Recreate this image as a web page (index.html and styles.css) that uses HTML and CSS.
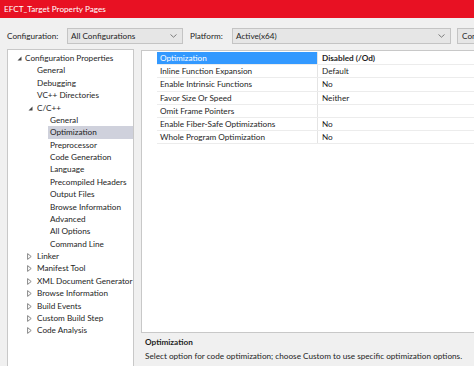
FILE: index.html
```html
<!DOCTYPE html>
<html>
<head>
<meta charset="utf-8">
<link rel="stylesheet" href="styles.css">
</head>
<body>
<div class="window">
  <div class="titlebar">EFCT_Target Property Pages</div>
  <div class="configbar">
    <span class="label">Configuration:</span>
    <div class="combo combo-config"><span>All Configurations</span><svg class="chev" width="7" height="4" viewBox="0 0 7 4"><path d="M0.5 0.5 L3.5 3.2 L6.5 0.5" fill="none" stroke="#707070" stroke-width="0.9"/></svg></div>
    <span class="label label-platform">Platform:</span>
    <div class="combo combo-platform"><span>Active(x64)</span><svg class="chev" width="7" height="4" viewBox="0 0 7 4"><path d="M0.5 0.5 L3.5 3.2 L6.5 0.5" fill="none" stroke="#707070" stroke-width="0.9"/></svg></div>
    <div class="button">Configuration Manager...</div>
  </div>
  <div class="main">
    <div class="tree">
      <div class="node l1"><svg class="exp" width="5" height="5" viewBox="0 0 5 5"><path d="M4.5 0.5 L4.5 4.5 L0.5 4.5 Z" fill="#444"/></svg>Configuration Properties</div>
      <div class="node l2">General</div>
      <div class="node l2">Debugging</div>
      <div class="node l2">VC++ Directories</div>
      <div class="node l2"><svg class="exp" width="5" height="5" viewBox="0 0 5 5"><path d="M4.5 0.5 L4.5 4.5 L0.5 4.5 Z" fill="#444"/></svg>C/C++</div>
      <div class="node l3">General</div>
      <div class="node l3"><span class="sel">Optimization</span></div>
      <div class="node l3">Preprocessor</div>
      <div class="node l3">Code Generation</div>
      <div class="node l3">Language</div>
      <div class="node l3">Precompiled Headers</div>
      <div class="node l3">Output Files</div>
      <div class="node l3">Browse Information</div>
      <div class="node l3">Advanced</div>
      <div class="node l3">All Options</div>
      <div class="node l3">Command Line</div>
      <div class="node l2"><svg class="col" width="5" height="7" viewBox="0 0 5 7"><path d="M0.6 0.6 L4.2 3.5 L0.6 6.4 Z" fill="none" stroke="#7a7a7a" stroke-width="0.9"/></svg>Linker</div>
      <div class="node l2"><svg class="col" width="5" height="7" viewBox="0 0 5 7"><path d="M0.6 0.6 L4.2 3.5 L0.6 6.4 Z" fill="none" stroke="#7a7a7a" stroke-width="0.9"/></svg>Manifest Tool</div>
      <div class="node l2"><svg class="col" width="5" height="7" viewBox="0 0 5 7"><path d="M0.6 0.6 L4.2 3.5 L0.6 6.4 Z" fill="none" stroke="#7a7a7a" stroke-width="0.9"/></svg>XML Document Generator</div>
      <div class="node l2"><svg class="col" width="5" height="7" viewBox="0 0 5 7"><path d="M0.6 0.6 L4.2 3.5 L0.6 6.4 Z" fill="none" stroke="#7a7a7a" stroke-width="0.9"/></svg>Browse Information</div>
      <div class="node l2"><svg class="col" width="5" height="7" viewBox="0 0 5 7"><path d="M0.6 0.6 L4.2 3.5 L0.6 6.4 Z" fill="none" stroke="#7a7a7a" stroke-width="0.9"/></svg>Build Events</div>
      <div class="node l2"><svg class="col" width="5" height="7" viewBox="0 0 5 7"><path d="M0.6 0.6 L4.2 3.5 L0.6 6.4 Z" fill="none" stroke="#7a7a7a" stroke-width="0.9"/></svg>Custom Build Step</div>
      <div class="node l2"><svg class="col" width="5" height="7" viewBox="0 0 5 7"><path d="M0.6 0.6 L4.2 3.5 L0.6 6.4 Z" fill="none" stroke="#7a7a7a" stroke-width="0.9"/></svg>Code Analysis</div>
    </div>
    <div class="right">
      <div class="grid">
        <div class="rows">
          <div class="row selected"><div class="name">Optimization</div><div class="value bold">Disabled (/Od)</div></div>
          <div class="row"><div class="name">Inline Function Expansion</div><div class="value">Default</div></div>
          <div class="row"><div class="name">Enable Intrinsic Functions</div><div class="value">No</div></div>
          <div class="row"><div class="name">Favor Size Or Speed</div><div class="value">Neither</div></div>
          <div class="row"><div class="name">Omit Frame Pointers</div><div class="value"></div></div>
          <div class="row"><div class="name">Enable Fiber-Safe Optimizations</div><div class="value">No</div></div>
          <div class="row"><div class="name">Whole Program Optimization</div><div class="value">No</div></div>
        </div>
      </div>
      <div class="desc">
        <div class="desc-title">Optimization</div>
        <div class="desc-text">Select option for code optimization; choose Custom to use specific optimization options.</div>
      </div>
    </div>
  </div>
</div>
</body>
</html>
```

FILE: styles.css
```css
html, body {
  margin: 0;
  padding: 0;
  overflow: hidden;
}
body {
  width: 474px;
  height: 366px;
  background: #f0f0f0;
  font-family: "Lato", "Open Sans", sans-serif;
  font-size: 8.2px;
  color: #1e1e1e;
}
.window {
  width: 474px;
  height: 366px;
  display: flex;
  flex-direction: column;
  overflow: hidden;
}
.titlebar {
  height: 18px;
  flex: none;
  background: #e81123;
  color: #fff;
  padding-left: 4px;
  line-height: 18px;
  font-size: 8.2px;
}
.configbar {
  height: 31px;
  flex: none;
  box-sizing: border-box;
  display: flex;
  align-items: center;
  padding: 5px 0 0 7px;
  white-space: nowrap;
}
.label {
  width: 60px;
  flex: none;
}
.label-platform {
  width: 42px;
  margin-left: 7px;
}
.combo {
  flex: none;
  height: 16px;
  box-sizing: border-box;
  border: 1px solid #c4c4c4;
  background: #e6e6e6;
  display: flex;
  align-items: center;
  justify-content: space-between;
  padding: 0 5px 0 3px;
}
.combo-config { width: 116px; }
.combo-platform { width: 219px; }
.button {
  flex: none;
  margin-left: 6px;
  height: 16px;
  box-sizing: border-box;
  border: 1px solid #c4c4c4;
  background: #e6e6e6;
  padding: 0 4px;
  line-height: 14px;
}
.main {
  flex: 1;
  display: flex;
  min-height: 0;
}
.tree {
  flex: none;
  margin-left: 7px;
  width: 127px;
  height: 330px;
  box-sizing: border-box;
  background: #fff;
  border: 1px solid #c8c8c8;
  padding-top: 2px;
}
.node {
  height: 12.38px;
  line-height: 12.38px;
  white-space: nowrap;
  position: relative;
}
.l1 { padding-left: 17px; }
.l2 { padding-left: 29px; }
.l3 { padding-left: 42px; }
.exp {
  position: absolute;
  top: 4px;
  margin-left: -9px;
}
.l1 .exp { margin-left: -8px; }
.col {
  position: absolute;
  top: 3px;
  margin-left: -10px;
}
.sel {
  display: block;
  background: #cfd1dc;
  margin-left: -2px;
  padding-left: 2px;
}
.right {
  flex: none;
  width: 333px;
  margin-left: 7px;
  display: flex;
  flex-direction: column;
}
.grid {
  height: 283px;
  flex: none;
  box-sizing: border-box;
  background: #fff;
  border: 1px solid #c8c8c8;
  border-right: none;
  margin-top: 1px;
  padding: 1px 0 0 15px;
}
.rows {
  background: #fff;
}
.row {
  display: flex;
  height: 13.2px;
  line-height: 12.2px;
  box-sizing: border-box;
  border-bottom: 1px solid #ececec;
}
.name {
  width: 161px;
  flex: none;
  padding-left: 3px;
  box-sizing: border-box;
  border-right: 1px solid #e4e4e4;
}
.value {
  flex: 1;
  padding-left: 4px;
}
.selected .name {
  background: #3399ff;
  color: #fff;
}
.bold { font-weight: bold; }
.desc {
  flex: 1;
  padding: 2px 0 0 4px;
  white-space: nowrap;
}
.desc-title {
  font-weight: bold;
  line-height: 14px;
}
.desc-text {
  line-height: 15px;
}
```
